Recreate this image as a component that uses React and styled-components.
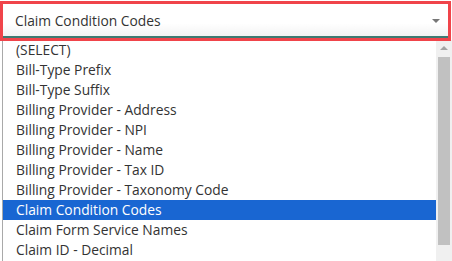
import React from "react";
import styled, { createGlobalStyle } from "styled-components";

const GlobalStyle = createGlobalStyle`
  html, body {
    margin: 0;
    padding: 0;
    background: #ffffff;
    font-family: "Open Sans", "Liberation Sans", sans-serif;
  }
`;

const Page = styled.div`
  width: 452px;
  height: 261px;
  overflow: hidden;
  padding-top: 1px;
  box-sizing: border-box;
`;

const Highlight = styled.div`
  width: 451px;
  height: 40px;
  box-sizing: border-box;
  border: 3px solid #f0444a;
  position: relative;
  z-index: 2;
`;

const SelectBox = styled.div`
  height: 100%;
  box-sizing: border-box;
  display: flex;
  align-items: center;
  justify-content: space-between;
  padding: 0 8px 0 12px;
  background: linear-gradient(#ffffff 60%, #f3f3f3);
  border-bottom: 2px solid #3e7a72;
  font-size: 13.8px;
  color: #333333;
`;

const Caret = styled.span`
  width: 0;
  height: 0;
  border-left: 4px solid transparent;
  border-right: 4px solid transparent;
  border-top: 4px solid #777777;
  margin-top: 2px;
`;

const Dropdown = styled.div`
  display: flex;
  height: 221px;
  margin-left: 2px;
  margin-top: -1px;
  border-left: 1px solid #a9a9a9;
`;

const Options = styled.ul`
  flex: 1;
  list-style: none;
  margin: 0;
  padding: 0;
`;

const Option = styled.li`
  height: 20px;
  line-height: 20px;
  padding-left: 13px;
  font-size: 13.8px;
  white-space: nowrap;
  color: ${({ $active }) => ($active ? "#ffffff" : "#333333")};
  background: ${({ $active }) => ($active ? "#1966d2" : "transparent")};
`;

const Scrollbar = styled.div`
  width: 16px;
  background: #f0f0f0;
  display: flex;
  flex-direction: column;
  align-items: center;
  padding-top: 2px;
  box-sizing: border-box;
`;

const UpArrow = styled.span`
  width: 0;
  height: 0;
  margin-top: 4px;
  border-left: 4px solid transparent;
  border-right: 4px solid transparent;
  border-bottom: 4px solid #a3a3a3;
`;

const Thumb = styled.div`
  width: 12px;
  height: 188px;
  margin-top: 7px;
  background: #c1c1c1;
`;

const items = [
  "(SELECT)",
  "Bill-Type Prefix",
  "Bill-Type Suffix",
  "Billing Provider - Address",
  "Billing Provider - NPI",
  "Billing Provider - Name",
  "Billing Provider - Tax ID",
  "Billing Provider - Taxonomy Code",
  "Claim Condition Codes",
  "Claim Form Service Names",
  "Claim ID - Decimal",
];

const App = () => {
  const selected = "Claim Condition Codes";
  return (
    <Page>
      <GlobalStyle />
      <Highlight>
        <SelectBox>
          {selected}
          <Caret />
        </SelectBox>
      </Highlight>
      <Dropdown>
        <Options>
          {items.map((item) => (
            <Option key={item} $active={item === selected}>
              {item}
            </Option>
          ))}
        </Options>
        <Scrollbar>
          <UpArrow />
          <Thumb />
        </Scrollbar>
      </Dropdown>
    </Page>
  );
};

export default App;
